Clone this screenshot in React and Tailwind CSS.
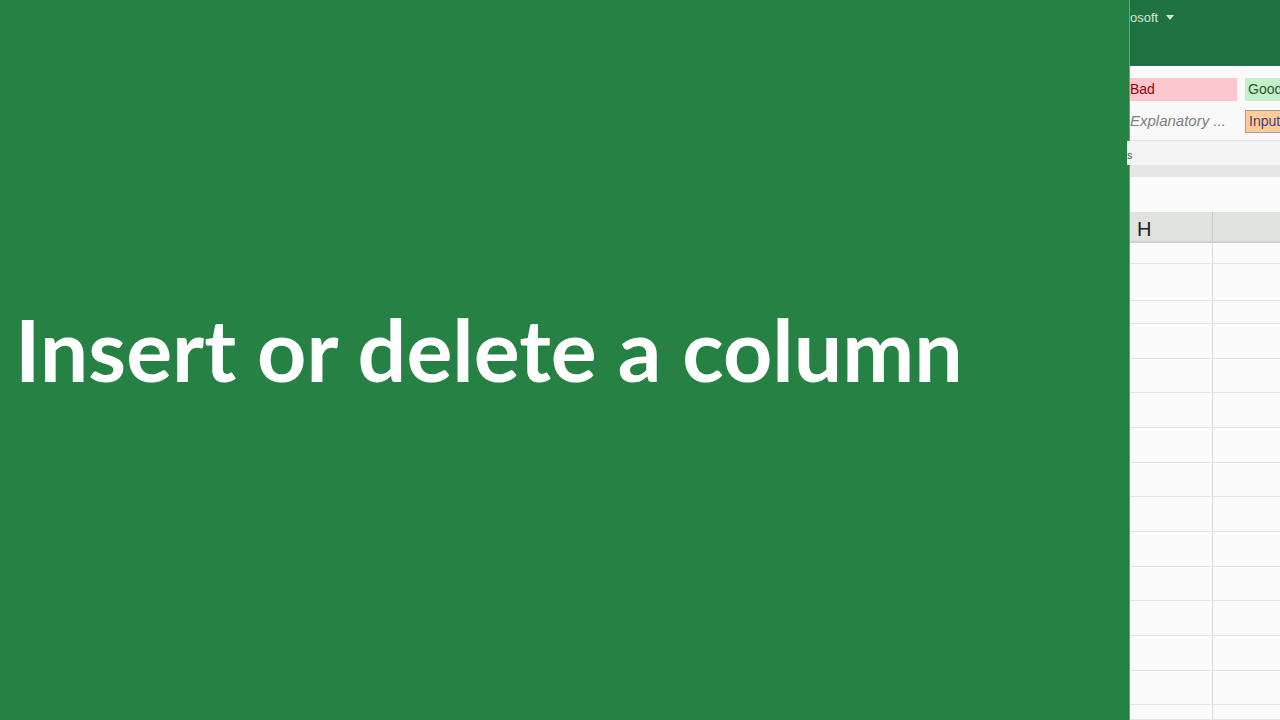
import React from 'react';

const rowHeights = [21, 37, 23, 35, 34, 35, 35, 34, 35, 35, 34, 35, 35, 34, 15];

const App = () => {
    return (
        <div className="flex w-[1280px] h-[720px] overflow-hidden">
            {/* Title panel */}
            <div className="w-[1130px] shrink-0 h-full bg-[#258244] pt-[306px] pl-[15px] border-r border-[#4fb06a]">
                <h1 className="text-white text-[86px] font-bold leading-none whitespace-nowrap" style={{ fontFamily: 'Lato, "Open Sans", sans-serif' }}>
                    Insert or delete a column
                </h1>
            </div>

            {/* Excel peek */}
            <div className="flex-1 flex flex-col bg-[#fafbfa]" style={{ fontFamily: '"Liberation Sans", Arial, sans-serif' }}>
                {/* title bar */}
                <div className="h-[66px] bg-[#1f7244] pt-[8px] flex items-start">
                    <span className="text-[#d6e8dc] text-[13px] flex items-center gap-[8px]">
                        osoft
                        <svg width="8" height="5" viewBox="0 0 8 5"><path d="M0 0h8L4 5z" fill="#d6e8dc" /></svg>
                    </span>
                </div>
                <div className="h-[4px] bg-[#ffffff]" />

                {/* ribbon styles */}
                <div className="h-[70px] bg-[#f8f9f8] flex flex-col gap-[9px] pt-[8px] text-[14px]">
                    <div className="flex gap-[8px] h-[23px]">
                        <div className="w-[107px] bg-[#fec7ce] text-[#9c0006] flex items-center">Bad</div>
                        <div className="w-[60px] bg-[#c6efce] text-[#1e5e20] flex items-center pl-[3px] whitespace-nowrap overflow-hidden">Good</div>
                    </div>
                    <div className="flex gap-[8px] h-[23px]">
                        <div className="w-[107px] text-[#7f7f7f] text-[15px] italic flex items-center whitespace-nowrap overflow-hidden">Explanatory ...</div>
                        <div className="w-[60px] bg-[#fdcc99] border border-[#a0a0a0] text-[#3f3f76] flex items-center pl-[3px] whitespace-nowrap overflow-hidden">Input</div>
                    </div>
                </div>
                <div className="h-[1px] bg-[#e2e3e2]" />
                <div className="h-[24px] bg-[#f3f4f3] text-[#555] text-[11px] flex items-center pt-[4px] -ml-[3px]">s</div>
                <div className="h-[12px] bg-[#e5e7e5]" />
                <div className="h-[35px] bg-[#fafbfa]" />

                {/* column header */}
                <div className="h-[31px] bg-[#e1e3e1] flex border-b-2 border-[#d0d2d0]">
                    <div className="w-[83px] border-r border-[#c8cac8] flex items-center pl-[7px] pt-[4px] text-[20px] text-[#222]">H</div>
                    <div className="flex-1" />
                </div>

                {/* grid rows */}
                <div className="flex-1 flex flex-col">
                    {rowHeights.map((h, i) => (
                        <div key={i} className="flex border-b border-[#e3e4e3] shrink-0" style={{ height: h }}>
                            <div className="w-[83px] border-r border-[#dcdddc]" />
                            <div className="flex-1" />
                        </div>
                    ))}
                </div>
            </div>
        </div>
    );
};

export default App;
